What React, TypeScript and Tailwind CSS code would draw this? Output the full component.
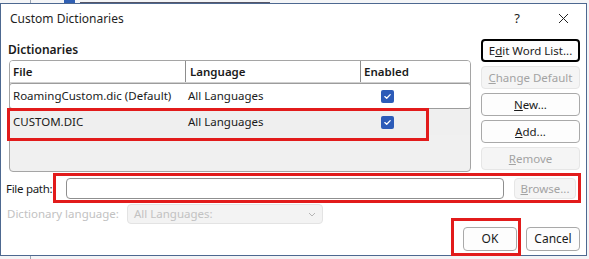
import { ReactNode } from 'react';

const font = { fontFamily: '"Noto Sans", "Segoe UI", sans-serif' };

interface BtnProps {
  children: ReactNode;
  disabled?: boolean;
  focused?: boolean;
}

const DlgButton = ({ children, disabled, focused }: BtnProps) => {
  if (focused) {
    return (
      <div className="h-[23px] flex items-center justify-center rounded-[4px] border-2 border-black bg-[#fdfdfd] text-[#1a1a1a]">
        {children}
      </div>
    );
  }
  return (
    <div
      className={
        disabled
          ? 'h-[23px] flex items-center justify-center rounded-[4px] border border-[#e6e6e6] bg-[#f5f5f5] text-[#a3a3a3]'
          : 'h-[23px] flex items-center justify-center rounded-[4px] border border-[#a9a9a9] bg-[#fdfdfd] text-[#1a1a1a]'
      }
    >
      {children}
    </div>
  );
};

const Check = () => (
  <div className="w-[13px] h-[13px] rounded-[2px] bg-[#2c5bb8] flex items-center justify-center">
    <svg width="9" height="9" viewBox="0 0 9 9">
      <path d="M1.8 4.6 L3.7 6.3 L7.2 2.6" fill="none" stroke="white" strokeWidth="1.3" strokeLinecap="round" strokeLinejoin="round" />
    </svg>
  </div>
);

const rows = [
  { file: 'RoamingCustom.dic (Default)', lang: 'All Languages', first: true },
  { file: 'CUSTOM.DIC', lang: 'All Languages', first: false },
];

export default function App() {
  return (
    <div className="w-[589px] h-[259px] relative overflow-hidden bg-[#f3f4f6] text-[11.5px] text-[#1a1a1a]" style={font}>
      {/* background window peeking above */}
      <div className="h-[3px] flex items-end bg-[#f4f5f7] overflow-hidden">
        <div className="ml-[30px] w-px h-[3px] bg-[#9aa4b2]" />
        <div className="ml-[33px] w-[11px] h-[3px] bg-[#2f5fb3]" />
        <div className="ml-[5px] w-[190px] h-[1px] bg-[#556]" />
      </div>

      <div className="w-[587px] h-[253px] border border-[#4d6890] bg-white flex flex-col">
        {/* title bar */}
        <div className="h-[29px] flex items-center pl-[9px] pr-[17px]">
          <span className="text-[12px] text-[#1f1f1f]">Custom Dictionaries</span>
          <span className="ml-auto text-[13px] mr-[38px]">?</span>
          <svg width="11" height="11" viewBox="0 0 11 11">
            <path d="M1 1 L10 10 M10 1 L1 10" stroke="#222" strokeWidth="1" />
          </svg>
        </div>

        <div className="flex pl-[7px] pr-[6px] pt-[6px]">
          {/* left column */}
          <div className="w-[463px]">
            <div className="h-[21px] pt-[3px] font-semibold text-[12px] leading-[16px]">Dictionaries</div>
            <div className="ml-[1px] h-[112px] border border-[#a5a5a5] rounded-[4px] bg-[#f0f0f0] overflow-hidden">
              <div className="h-[22px] flex bg-white font-semibold border-b border-[#d0d0d0]">
                <div className="w-[176px] border-r border-[#8d8d8d] pl-[3px] flex items-center">File</div>
                <div className="w-[175px] border-r border-[#8d8d8d] pl-[4px] flex items-center">Language</div>
                <div className="flex-1 pl-[3px] flex items-center">Enabled</div>
              </div>
              {rows.map(r => (
                <div
                  key={r.file}
                  className={
                    r.first
                      ? 'h-[26px] flex items-center bg-white border border-[#9c9c9c] rounded-[3px] -mx-px'
                      : 'h-[26px] flex items-center bg-[#efefef]'
                  }
                >
                  <div className="w-[176px] pl-[3px]">{r.file}</div>
                  <div className="w-[175px] pl-[2px]">{r.lang}</div>
                  <div className="flex-1 pl-[20px]">
                    <Check />
                  </div>
                </div>
              ))}
            </div>
          </div>

          {/* right column */}
          <div className="ml-[10px] w-[99px] flex flex-col gap-[4px]">
            <DlgButton focused>
              <span>
                E<span className="underline">d</span>it Word List...
              </span>
            </DlgButton>
            <DlgButton disabled>
              <span>
                <span className="underline">C</span>hange Default
              </span>
            </DlgButton>
            <DlgButton>
              <span>
                <span className="underline">N</span>ew...
              </span>
            </DlgButton>
            <DlgButton>
              <span>
                <span className="underline">A</span>dd...
              </span>
            </DlgButton>
            <DlgButton disabled>
              <span>
                <span className="underline">R</span>emove
              </span>
            </DlgButton>
          </div>
        </div>

        {/* file path */}
        <div className="flex items-center pl-[5px] mt-[6px] h-[21px]">
          <span className="w-[60px] tracking-[-0.3px]">File path:</span>
          <div className="w-[438px] h-[21px] border border-[#8f8f8f] rounded-[4px] bg-white" />
          <div className="ml-[10px] w-[62px] h-[21px] flex items-center justify-center rounded-[4px] border border-[#e6e6e6] bg-[#f5f5f5] text-[#a3a3a3]">
            <span>
              <span className="underline">B</span>rowse...
            </span>
          </div>
        </div>

        {/* dictionary language */}
        <div className="flex items-center pl-[6px] mt-[5px] h-[20px]">
          <span className="w-[120px] text-[#c2c2c2]">Dictionary language:</span>
          <div className="w-[196px] h-[20px] border border-[#e3e3e3] rounded-[4px] bg-[#f3f3f3] flex items-center pl-[6px] pr-[6px] text-[#c2c2c2]">
            <span>All Languages:</span>
            <svg className="ml-auto" width="8" height="5" viewBox="0 0 8 5">
              <path d="M1 1 L4 4 L7 1" fill="none" stroke="#b5b5b5" strokeWidth="1" />
            </svg>
          </div>
        </div>

        {/* ok / cancel */}
        <div className="flex justify-end gap-[9px] pr-[6px] mt-[3px]">
          <div className="w-[54px] h-[24px] flex items-center justify-center rounded-[4px] border border-[#a9a9a9] bg-[#fdfdfd] text-[12px]">OK</div>
          <div className="w-[54px] h-[24px] flex items-center justify-center rounded-[4px] border border-[#a9a9a9] bg-[#fdfdfd] text-[12px]">Cancel</div>
        </div>
      </div>

      {/* background window below */}
      <div className="h-[3px] flex">
        <div className="ml-[30px] w-px h-[3px] bg-[#9aa4b2]" />
      </div>

      {/* red annotation boxes */}
      <div className="absolute left-[7px] top-[108px] w-[422px] h-[33px] border-[3px] border-[#e21b1b]" />
      <div className="absolute left-[53px] top-[173px] w-[528px] h-[30px] border-[3px] border-[#e21b1b]" />
      <div className="absolute left-[451px] top-[218px] w-[70px] h-[38px] border-[3px] border-[#e21b1b]" />
    </div>
  );
}
